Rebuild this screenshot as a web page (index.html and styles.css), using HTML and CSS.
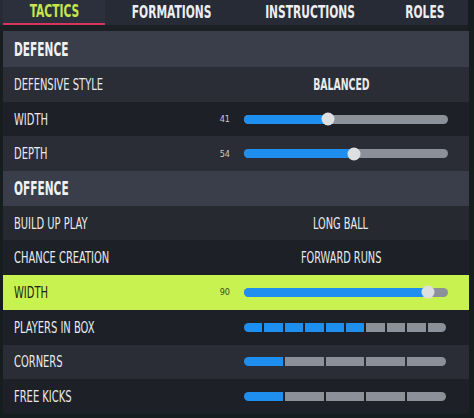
FILE: index.html
```html
<!DOCTYPE html>
<html>
<head>
<meta charset="utf-8">
<link rel="stylesheet" href="styles.css">
</head>
<body>
<div class="screen">
  <nav class="tabs">
    <div class="tab active"><span>TACTICS</span></div>
    <div class="tab"><span>FORMATIONS</span></div>
    <div class="tab"><span>INSTRUCTIONS</span></div>
    <div class="tab"><span>ROLES</span></div>
  </nav>
  <div class="gapband"></div>
  <section class="panel">
    <div class="head first"><span class="sq">DEFENCE</span></div>
    <div class="row light">
      <span class="label sq">DEFENSIVE STYLE</span><span class="num"></span>
      <div class="ctrl value"><span class="sqc">BALANCED</span></div>
    </div>
    <div class="row dark">
      <span class="label sq">WIDTH</span><span class="num">41</span>
      <div class="ctrl"><div class="slider"><div class="fill" style="width:41%"></div><div class="thumb" style="left:41%"></div></div></div>
    </div>
    <div class="row light">
      <span class="label sq">DEPTH</span><span class="num">54</span>
      <div class="ctrl"><div class="slider"><div class="fill" style="width:54%"></div><div class="thumb" style="left:54%"></div></div></div>
    </div>
    <div class="head"><span class="sq">OFFENCE</span></div>
    <div class="row mid">
      <span class="label sq">BUILD UP PLAY</span><span class="num"></span>
      <div class="ctrl value plain"><span class="sqc">LONG BALL</span></div>
    </div>
    <div class="row dark">
      <span class="label sq">CHANCE CREATION</span><span class="num"></span>
      <div class="ctrl value plain"><span class="sqc">FORWARD RUNS</span></div>
    </div>
    <div class="row selected">
      <span class="label sq">WIDTH</span><span class="num">90</span>
      <div class="ctrl"><div class="slider"><div class="fill" style="width:90%"></div><div class="thumb" style="left:90%"></div></div></div>
    </div>
    <div class="row dark">
      <span class="label sq">PLAYERS IN BOX</span><span class="num"></span>
      <div class="ctrl"><div class="segs">
        <i class="on"></i><i class="on"></i><i class="on"></i><i class="on"></i><i class="on"></i><i class="on"></i><i></i><i></i><i></i><i></i>
      </div></div>
    </div>
    <div class="row light">
      <span class="label sq">CORNERS</span><span class="num"></span>
      <div class="ctrl"><div class="segs">
        <i class="on"></i><i></i><i></i><i></i><i></i>
      </div></div>
    </div>
    <div class="row dark">
      <span class="label sq">FREE KICKS</span><span class="num"></span>
      <div class="ctrl"><div class="segs">
        <i class="on"></i><i></i><i></i><i></i><i></i>
      </div></div>
    </div>
  </section>
</div>
</body>
</html>
```
FILE: styles.css
```css
html, body {
  margin: 0;
  padding: 0;
  background: #161d1e;
}
body {
  font-family: "DejaVu Sans Condensed", "DejaVu Sans", sans-serif;
  color: #e9eaec;
  width: 474px;
  height: 418px;
  overflow: hidden;
}
.screen {
  display: flex;
  flex-direction: column;
}
.tabs {
  display: grid;
  grid-template-columns: 105px 134px 142px 1fr;
  height: 25px;
  background: #272b36;
  margin-right: 6px;
}
.tab {
  display: flex;
  align-items: center;
  justify-content: center;
  font-size: 17.5px;
  font-weight: 700;
  color: #eceef0;
  height: 25px;
  box-sizing: border-box;
}
.tab span {
  display: inline-block;
  transform: scaleX(0.68);
  padding-bottom: 1px;
  white-space: nowrap;
}
.tab.active {
  background: #2c303c;
  color: #c6e64c;
  border-bottom: 2px solid #d8345c;
  margin-left: 3px;
}
.gapband {
  height: 6px;
  background: #1a2023;
  margin-right: 6px;
}
.panel {
  margin-left: 3px;
  width: 466px;
  display: flex;
  flex-direction: column;
}
.sq {
  display: inline-block;
  transform: scaleX(0.69);
  transform-origin: left center;
  white-space: nowrap;
}
.sqc {
  display: inline-block;
  transform: scaleX(0.65);
  transform-origin: center center;
  white-space: nowrap;
}
.head {
  height: 34.7px;
  background: #393e4a;
  display: flex;
  align-items: center;
  padding-left: 11px;
  font-size: 19px;
  font-weight: 700;
  color: #f0f1f3;
}
.head.first { height: 36px; }
.head .sq { transform: scaleX(0.62); }
.row {
  height: 34.7px;
  display: grid;
  grid-template-columns: 1fr 30px 204px;
  align-items: center;
  padding-left: 11px;
  padding-right: 21px;
  font-size: 16px;
}
.row.light { background: #2a2d35; }
.row.mid { background: #262930; }
.row.dark { background: #1e2028; }
.row.selected {
  background: #c8f250;
  color: #1c2410;
}
.label { white-space: nowrap; }
.num {
  font-size: 9px;
  text-align: right;
  padding-right: 14px;
  color: #c9cbd0;
}
.selected .num { color: #3a4a1a; }
.ctrl { position: relative; }
.value {
  text-align: center;
  padding-right: 10px;
  font-weight: 700;
  font-size: 16px;
}
.value.plain { font-weight: 400; }
.value.plain .sqc { transform: scaleX(0.68); }
.slider {
  position: relative;
  height: 9px;
  border-radius: 5px;
  background: #8b9099;
}
.fill {
  height: 9px;
  border-radius: 5px;
  background: #1f8fef;
}
.thumb {
  position: absolute;
  top: 50%;
  width: 13px;
  height: 13px;
  border-radius: 50%;
  background: #dedfe1;
  transform: translate(-50%, -50%);
}
.segs {
  display: flex;
  gap: 2px;
  height: 9px;
  margin-right: 2px;
}
.segs i {
  flex: 1;
  background: #8b9099;
}
.segs i.on { background: #1f8fef; }
.segs i:first-child { border-radius: 5px 0 0 5px; }
.segs i:last-child { border-radius: 0 5px 5px 0; }
```
